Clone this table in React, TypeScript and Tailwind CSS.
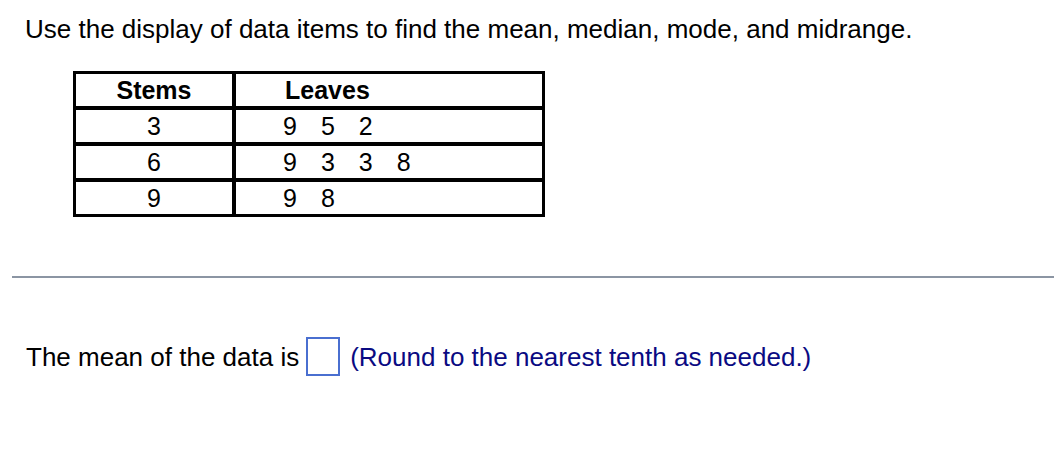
import { Fragment } from "react";

const rows: { stem: string; leaves: string[] }[] = [
  { stem: "3", leaves: ["9", "5", "2"] },
  { stem: "6", leaves: ["9", "3", "3", "8"] },
  { stem: "9", leaves: ["9", "8"] },
];

export default function App() {
  return (
    <div className="min-h-screen bg-white font-['Liberation_Sans',Arial,sans-serif] text-[25px] leading-[30px] text-black">
      <p className="pl-[25px] pt-[14px] text-[26px]">
        Use the display of data items to find the mean, median, mode, and midrange.
      </p>

      <div className="ml-[73px] mt-[27px] grid w-[472px] grid-cols-[156px_306px] gap-[4px] border-[3px] border-black bg-black">
        <div className="flex h-[32px] items-center justify-center bg-white font-bold">Stems</div>
        <div className="flex h-[32px] items-center bg-white pl-[49px] font-bold">Leaves</div>
        {rows.map((r) => (
          <Fragment key={r.stem}>
            <div className="flex h-[32px] items-center justify-center bg-white">{r.stem}</div>
            <div className="flex h-[32px] items-center gap-[24px] bg-white pl-[47px]">
              {r.leaves.map((l, i) => (
                <span key={i}>{l}</span>
              ))}
            </div>
          </Fragment>
        ))}
      </div>

      <div className="ml-[12px] mt-[59px] h-[2px] bg-[#8b95a3]" />

      <div className="mt-[59px] flex items-center pl-[26px] text-[26px]">
        <span>The mean of the data is</span>
        <span className="ml-[7px] h-[39px] w-[34px] border-2 border-[#4a6fd0]" />
        <span className="ml-[10px] text-[#0a0a82]">(Round to the nearest tenth as needed.)</span>
      </div>
    </div>
  );
}
